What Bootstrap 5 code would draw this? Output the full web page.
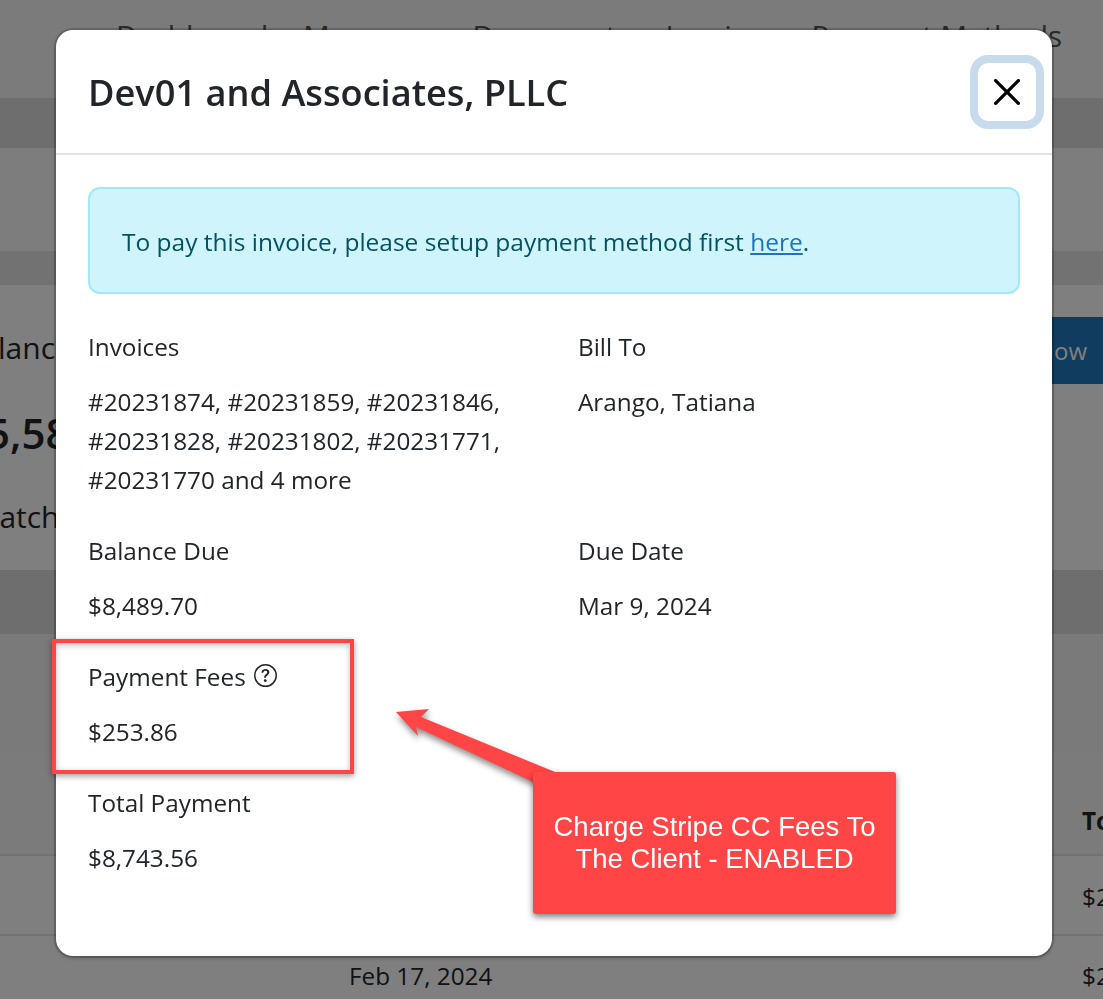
<!DOCTYPE html>
<html lang="en">
<head>
  <meta charset="UTF-8"/>
  <meta name="viewport" content="width=device-width, initial-scale=1.0"/>
  <title>Invoice Payment</title>
  <link href="https://cdn.jsdelivr.net/npm/bootstrap@5.3.3/dist/css/bootstrap.min.css" rel="stylesheet"/>
  <style>
    html, body { height: 999px; overflow: hidden; }
    body { font-family: "Open Sans", "Noto Sans", sans-serif; font-size: 24.3px; line-height: 39px; color: #212529; background: #fff; }

    /* page behind the modal */
    .top-nav { height: 98px; background: #f6f6f6; padding: 16px 0 0 116px; gap: 35px; color: #555; font-size: 29.5px; white-space: nowrap; }
    .band-a { height: 50px; background: #dddddd; }
    .band-b { height: 103px; background: #fbfbfb; }
    .band-c { height: 34px; background: #e4e4e4; }
    .bal-area { height: 285px; background: #fff; padding: 43px 0 0 0; }
    .bal-col { margin-left: -38px; font-size: 30px; }
    .bal-big { font-size: 42px; line-height: 50px; font-weight: 600; margin: 41px 0 39px; }
    .bal-sub { margin-left: 18px; }
    .pay-btn { background: #1e78be; color: #fff; height: 67px; margin-top: -11px; padding: 14px 16px 0 32px; font-size: 24px; }
    .band-d { height: 64px; background: #dcdcdc; }
    .band-e { height: 118px; background: #f5f5f5; }
    .row-h { height: 104px; border-bottom: 2px solid #e4e4e4; background: #f6f6f6; align-items: flex-end; padding-bottom: 14px; font-weight: 700; }
    .row-r { height: 80px; border-bottom: 2px solid #e4e4e4; padding-top: 21px; }
    .row-last { height: 64px; background: #fff; padding-top: 20px; border-bottom: 0; }
    .cell-date { padding-left: 349px; }
    .cell-total { width: 21px; white-space: nowrap; margin-left: auto; }

    /* modal */
    .pay-dialog { max-width: none; width: 996px; margin: 30px 0 0 56px; }
    .pay-dialog .modal-content { height: 926px; border: 0; border-radius: 17px; box-shadow: 0 0 0 2px rgba(0,0,0,.17), 0 2px 4px rgba(0,0,0,.25); }
    .pay-dialog .modal-header { height: 125px; padding: 0 8px 0 32px; border-bottom: 2px solid #dee2e6; }
    .pay-dialog .modal-title { font-size: 36.2px; line-height: 44px; font-weight: 600; }
    .pay-dialog .btn-close { box-sizing: content-box; width: 26px; height: 26px; padding: 16px; margin: 0 8px 0 0; opacity: 1; border-radius: 10px; background-size: 26px auto; box-shadow: 0 0 0 8px #c8dbed; }
    .pay-dialog .modal-body { padding: 32px 32px 0 32px; }
    .info-box { height: 107px; margin-bottom: 33px; padding: 33px 32px; border: 2px solid #9eeaf9; border-radius: 12px; background: #cff4fc; color: #055160; font-size: 24.5px; }
    .info-box a { color: #1b75bb; }
    .detail-grid { display: grid; grid-template-columns: 490px 1fr; row-gap: 32px; }
    .detail-label { margin-bottom: 16px; }
    .help-icon { width: 23px; height: 23px; vertical-align: -1px; margin-left: 2px; }

    /* screenshot annotations */
    .mark-box { position: absolute; left: 52px; top: 639px; width: 302px; height: 135px; border: 4px solid #ff4545; box-shadow: 0 2px 6px rgba(0,0,0,.4), inset 0 2px 6px rgba(0,0,0,.25); z-index: 1060; }
    .mark-arrow { position: absolute; left: 380px; top: 695px; width: 190px; height: 95px; z-index: 1060; overflow: visible; filter: drop-shadow(1px 4px 3px rgba(0,0,0,.45)); }
    .mark-note { position: absolute; left: 533px; top: 772px; width: 363px; height: 142px; border-radius: 3px; background: #ff4545; color: #fff; font-family: "Liberation Sans", Arial, sans-serif; font-size: 27.5px; line-height: 32px; box-shadow: 0 3px 6px rgba(0,0,0,.5); z-index: 1061; }
  </style>
</head>
<body>
  <!-- page under the backdrop -->
  <nav class="top-nav d-flex">
    <span>Dashboard</span><span>Messages</span><span>Documents</span><span>Invoices</span><span>Payment Methods</span>
  </nav>
  <div class="band-a"></div>
  <div class="band-b"></div>
  <div class="band-c"></div>
  <div class="bal-area d-flex justify-content-between align-items-start">
    <div class="bal-col">
      <div>Balance Due</div>
      <div class="bal-big">$5,589.70</div>
      <div class="bal-sub">Batch</div>
    </div>
    <div class="pay-btn">Pay Now</div>
  </div>
  <div class="band-d"></div>
  <div class="band-e"></div>
  <div class="row-h d-flex"><div class="cell-total">Total</div></div>
  <div class="row-r d-flex"><div class="cell-total">$2,489.70</div></div>
  <div class="row-r row-last d-flex"><div class="cell-date">Feb 17, 2024</div><div class="cell-total">$2,489.70</div></div>

  <div class="modal-backdrop show"></div>

  <div class="modal d-block" tabindex="-1">
    <div class="modal-dialog pay-dialog">
      <div class="modal-content">
        <div class="modal-header">
          <h5 class="modal-title">Dev01 and Associates, PLLC</h5>
          <button type="button" class="btn-close" aria-label="Close"></button>
        </div>
        <div class="modal-body">
          <div class="info-box">To pay this invoice, please setup payment method first <a href="#">here</a>.</div>
          <div class="detail-grid">
            <div>
              <div class="detail-label">Invoices</div>
              <div>#20231874, #20231859, #20231846,<br>#20231828, #20231802, #20231771,<br>#20231770 and 4 more</div>
            </div>
            <div>
              <div class="detail-label">Bill To</div>
              <div>Arango, Tatiana</div>
            </div>
            <div>
              <div class="detail-label">Balance Due</div>
              <div>$8,489.70</div>
            </div>
            <div>
              <div class="detail-label">Due Date</div>
              <div>Mar 9, 2024</div>
            </div>
            <div>
              <div class="detail-label">Payment Fees
                <svg class="help-icon" viewBox="0 0 16 16" fill="currentColor">
                  <path d="M8 15A7 7 0 1 1 8 1a7 7 0 0 1 0 14zm0 1A8 8 0 1 0 8 0a8 8 0 0 0 0 16z"/>
                  <path d="M5.255 5.786a.237.237 0 0 0 .241.247h.825c.138 0 .248-.113.266-.25.09-.656.54-1.134 1.342-1.134.686 0 1.314.343 1.314 1.168 0 .635-.374.927-.965 1.371-.673.489-1.206 1.06-1.168 1.987l.003.217a.25.25 0 0 0 .25.246h.811a.25.25 0 0 0 .25-.25v-.105c0-.718.273-.927 1.01-1.486.609-.463 1.244-.977 1.244-2.056 0-1.511-1.276-2.241-2.673-2.241-1.267 0-2.655.59-2.75 2.286zm1.557 5.763c0 .533.425.927 1.01.927.609 0 1.028-.394 1.028-.927 0-.552-.42-.94-1.029-.94-.584 0-1.009.388-1.009.94z"/>
                </svg>
              </div>
              <div>$253.86</div>
            </div>
            <div></div>
            <div>
              <div class="detail-label">Total Payment</div>
              <div>$8,743.56</div>
            </div>
          </div>
        </div>
      </div>
    </div>
  </div>

  <!-- annotations drawn over the screenshot -->
  <div class="mark-box"></div>
  <svg class="mark-arrow" viewBox="380 695 190 95">
    <polygon fill="#ff4545" points="396,712 429,709 421,717 555,772 533,782 416,727 418,736"/>
  </svg>
  <div class="mark-note d-flex align-items-center justify-content-center text-center">Charge Stripe CC Fees To<br>The Client - ENABLED</div>

  <script src="https://cdn.jsdelivr.net/npm/bootstrap@5.3.3/dist/js/bootstrap.bundle.min.js"></script>
</body>
</html>
